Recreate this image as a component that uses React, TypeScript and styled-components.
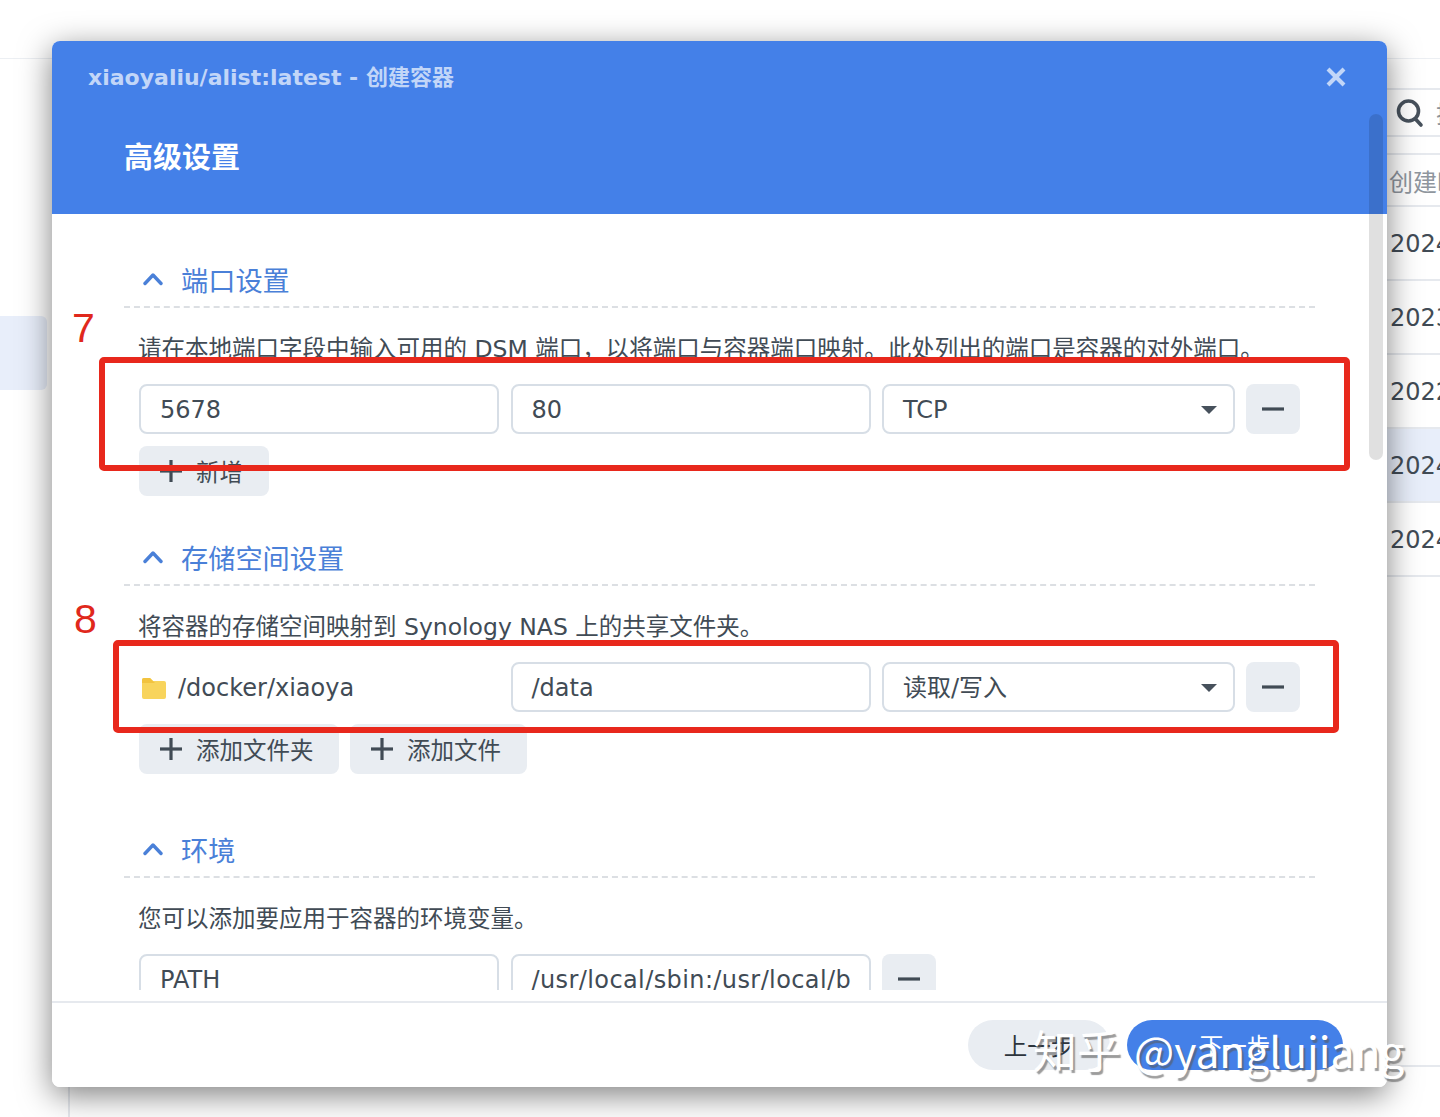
import React from 'react';
import styled, { createGlobalStyle } from 'styled-components';

const GlobalStyle = createGlobalStyle`
  html, body {
    margin: 0;
    padding: 0;
    background: #fff;
  }
  body {
    font-family: 'DejaVu Sans', 'Noto Sans CJK SC', sans-serif;
    color: #414b55;
  }
`;

const Page = styled.div`
  position: relative;
  width: 1440px;
  height: 1117px;
  overflow: hidden;
  background: #fff;
`;

const TopBar = styled.div`
  height: 58px;
  border-bottom: 1px solid #eceff3;
`;

const Main = styled.div`
  display: flex;
  justify-content: space-between;
  height: 1058px;
`;

const Sidebar = styled.div`
  width: 70px;
  padding-top: 257px;
  border-right: 2px solid #e6e9ee;
  box-sizing: border-box;
`;

const SidebarItem = styled.div`
  width: 47px;
  height: 74px;
  background: #e8eefa;
  border-radius: 0 6px 6px 0;
`;

const Table = styled.div`
  width: 53px;
  overflow: hidden;
  border-top: 2px solid #e6e9ee;
  margin-top: 29px;
  height: 979px;
  border-bottom: 2px solid #e6e9ee;
  box-sizing: border-box;
`;

const SearchBox = styled.div`
  display: flex;
  align-items: center;
  gap: 12px;
  height: 47px;
  padding-left: 9px;
  border-bottom: 2px solid #e6e9ee;
  box-sizing: border-box;
  color: #8a929b;
  font-size: 24px;
  white-space: nowrap;
`;

const TableHead = styled.div`
  display: flex;
  align-items: center;
  height: 54px;
  margin-top: 16px;
  padding-left: 2px;
  border-top: 2px solid #e6e9ee;
  border-bottom: 2px solid #e6e9ee;
  box-sizing: border-box;
  color: #8f969e;
  font-size: 24px;
  white-space: nowrap;
`;

const TableRow = styled.div<{ $selected?: boolean }>`
  display: flex;
  align-items: center;
  height: 74px;
  padding: 2px 0 0 3px;
  border-bottom: 2px solid #e6e9ee;
  box-sizing: border-box;
  background: ${p => (p.$selected ? '#e8eefa' : 'transparent')};
  font-size: 24px;
  white-space: nowrap;
`;

const Modal = styled.div`
  position: absolute;
  left: 52px;
  top: 41px;
  width: 1335px;
  height: 1046px;
  display: flex;
  flex-direction: column;
  background: #fff;
  border-radius: 8px;
  overflow: hidden;
`;

const ModalShadow = styled.div`
  position: absolute;
  left: 52px;
  top: 41px;
  width: 1335px;
  height: 1046px;
  border-radius: 8px;
  box-shadow: 0 8px 32px rgba(0, 0, 0, 0.5);
`;

const Header = styled.div`
  position: relative;
  height: 173px;
  flex-shrink: 0;
  background: #4480e8;
  box-sizing: border-box;
  padding: 21px 36px 0;
`;

const HeaderTitle = styled.div`
  font-size: 22px;
  line-height: 32px;
  font-weight: 700;
  color: #c2d6f8;
`;

const HeaderSub = styled.div`
  margin: 44px 0 0 36px;
  font-size: 29px;
  line-height: 40px;
  font-weight: 700;
  color: #fff;
`;

const CloseButton = styled.svg`
  position: absolute;
  right: 41px;
  top: 26px;
`;

const ScrollThumb = styled.div`
  position: absolute;
  right: 4px;
  top: 73px;
  width: 14px;
  height: 346px;
  border-radius: 7px;
  background: rgba(0, 0, 0, 0.12);
`;

const Body = styled.div`
  height: 776px;
  flex-shrink: 0;
  overflow: hidden;
  padding-left: 72px;
  width: 1191px;
  box-sizing: content-box;
`;

const Section = styled.section<{ $top: number }>`
  margin-top: ${p => p.$top}px;
`;

const SectionHead = styled.div`
  display: flex;
  align-items: center;
  gap: 18px;
  height: 36px;
  padding: 0 0 9px 19px;
  border-bottom: 2px dashed #dcdfe3;
  color: #4a80d8;
  font-size: 27.2px;
`;

const Desc = styled.p`
  margin: 23px 0 17px 14px;
  font-size: 23.5px;
  line-height: 36px;
  color: #414b55;
  white-space: nowrap;
`;

const Row = styled.div<{ $compact?: boolean }>`
  display: grid;
  grid-template-columns: ${p => (p.$compact ? '360px 360px 54px' : '360px 360px 352.5px 54px')};
  gap: 11.5px;
  margin: 0 15px;
`;

const Field = styled.div`
  display: flex;
  align-items: center;
  justify-content: space-between;
  height: 50px;
  padding: 2px 16px 0 19px;
  border: 2px solid #d7dee6;
  border-radius: 8px;
  box-sizing: border-box;
  font-size: 24px;
  line-height: 30px;
  color: #414b55;
  white-space: nowrap;
  overflow: hidden;
`;

const LongField = styled(Field)`
  letter-spacing: 0.4px;
`;

const PathCell = styled.div`
  display: flex;
  align-items: center;
  gap: 11px;
  height: 50px;
  padding: 2px 0 0 2px;
  box-sizing: border-box;
  font-size: 24px;
  line-height: 30px;
  white-space: nowrap;
`;

const Caret = styled.span`
  width: 0;
  height: 0;
  border-left: 8px solid transparent;
  border-right: 8px solid transparent;
  border-top: 8px solid #47515c;
`;

const IconButton = styled.div`
  display: flex;
  align-items: center;
  justify-content: center;
  height: 50px;
  border-radius: 8px;
  background: #e9edf2;
`;

const Actions = styled.div`
  display: flex;
  gap: 11px;
  margin: 12px 15px 0;
`;

const AddButton = styled.div`
  display: flex;
  align-items: center;
  gap: 14px;
  height: 50px;
  padding: 0 25.5px 0 21px;
  border-radius: 8px;
  background: #e9edf2;
  font-size: 23.5px;
  color: #414b55;
  white-space: nowrap;
`;

const Footer = styled.div`
  flex: 1;
  margin-top: 11px;
  display: flex;
  justify-content: flex-end;
  gap: 17px;
  padding: 17px 44px 0 0;
  border-top: 2px solid #e6e9ee;
`;

const FooterButton = styled.div<{ $primary?: boolean }>`
  display: flex;
  align-items: center;
  justify-content: center;
  width: ${p => (p.$primary ? '216px' : '142px')};
  height: 50px;
  border-radius: 25px;
  background: ${p => (p.$primary ? '#4480e8' : '#e9edf2')};
  color: ${p => (p.$primary ? '#fff' : '#2c343c')};
  font-size: 23.5px;
`;

const Callout = styled.div<{ $x: number; $y: number; $w: number; $h: number }>`
  position: absolute;
  left: ${p => p.$x}px;
  top: ${p => p.$y}px;
  width: ${p => p.$w}px;
  height: ${p => p.$h}px;
  border: 6px solid #e8281c;
  border-radius: 5px;
  box-sizing: border-box;
`;

const CalloutNumber = styled.div<{ $x: number; $y: number }>`
  position: absolute;
  left: ${p => p.$x}px;
  top: ${p => p.$y}px;
  font-family: 'Liberation Sans', sans-serif;
  font-size: 41px;
  line-height: 44px;
  color: #e0281c;
`;

const Watermark = styled.div`
  position: absolute;
  left: 1033px;
  top: 1017px;
  display: flex;
  align-items: baseline;
  gap: 13px;
  font-family: 'Noto Sans CJK SC', sans-serif;
  font-size: 44px;
  line-height: 64px;
  color: #fff;
  text-shadow: 2px 3px 1px rgba(90, 90, 90, 0.6);
  white-space: nowrap;
`;

const WatermarkHandle = styled.span`
  font-size: 42.5px;
`;

const Chevron = () => (
  <svg width="20" height="14" viewBox="0 0 20 14" fill="none" stroke="#4a80d8" strokeWidth="3.4" strokeLinecap="round" strokeLinejoin="round">
    <polyline points="2,11.5 10,3 18,11.5" />
  </svg>
);

const Plus = () => (
  <svg width="22" height="22" viewBox="0 0 22 22" stroke="#414b55" strokeWidth="3.2">
    <line x1="0" y1="11" x2="22" y2="11" />
    <line x1="11" y1="0" x2="11" y2="22" />
  </svg>
);

const Minus = () => (
  <svg width="22" height="4" viewBox="0 0 22 4" stroke="#414b55" strokeWidth="3.2">
    <line x1="0" y1="2" x2="22" y2="2" />
  </svg>
);

const Folder = () => (
  <svg width="26" height="24" viewBox="0 0 26 24">
    <path d="M1 4a2 2 0 0 1 2-2h6l3 3h11a2 2 0 0 1 2 2v14a2 2 0 0 1-2 2H3a2 2 0 0 1-2-2z" fill="#f8d45c" />
    <path d="M1 4a2 2 0 0 1 2-2h6l3 3 2 2H1z" fill="#f2c33f" />
  </svg>
);

const SearchGlyph = () => (
  <svg width="28" height="30" viewBox="0 0 28 30" fill="none" stroke="#47515c" strokeWidth="3.6" strokeLinecap="round" style={{ flexShrink: 0 }}>
    <circle cx="12.5" cy="13" r="10" />
    <line x1="19.5" y1="21" x2="25" y2="27" />
  </svg>
);

export default function App(): React.JSX.Element {
  return (
    <Page>
      <GlobalStyle />
      <TopBar />
      <Main>
        <Sidebar>
          <SidebarItem />
        </Sidebar>
        <Table>
          <SearchBox>
            <SearchGlyph />
            <span>搜索</span>
          </SearchBox>
          <TableHead>创建时间</TableHead>
          <TableRow>2024</TableRow>
          <TableRow>2023</TableRow>
          <TableRow>2022</TableRow>
          <TableRow $selected>2024</TableRow>
          <TableRow>2024</TableRow>
        </Table>
      </Main>

      <ModalShadow />
      <Modal>
        <Header>
          <HeaderTitle>xiaoyaliu/alist:latest - 创建容器</HeaderTitle>
          <HeaderSub>高级设置</HeaderSub>
          <CloseButton width="20" height="20" viewBox="0 0 20 20" stroke="#c2d6f8" strokeWidth="4">
            <line x1="2" y1="2" x2="18" y2="18" />
            <line x1="18" y1="2" x2="2" y2="18" />
          </CloseButton>
        </Header>

        <Body>
          <Section $top={47}>
            <SectionHead>
              <Chevron />
              端口设置
            </SectionHead>
            <Desc>请在本地端口字段中输入可用的 DSM 端口，以将端口与容器端口映射。此处列出的端口是容器的对外端口。</Desc>
            <Row>
              <Field>5678</Field>
              <Field>80</Field>
              <Field>
                TCP
                <Caret />
              </Field>
              <IconButton>
                <Minus />
              </IconButton>
            </Row>
            <Actions>
              <AddButton>
                <Plus />
                新增
              </AddButton>
            </Actions>
          </Section>

          <Section $top={43}>
            <SectionHead>
              <Chevron />
              存储空间设置
            </SectionHead>
            <Desc>将容器的存储空间映射到 Synology NAS 上的共享文件夹。</Desc>
            <Row>
              <PathCell>
                <Folder />
                /docker/xiaoya
              </PathCell>
              <Field>/data</Field>
              <Field>
                读取/写入
                <Caret />
              </Field>
              <IconButton>
                <Minus />
              </IconButton>
            </Row>
            <Actions>
              <AddButton>
                <Plus />
                添加文件夹
              </AddButton>
              <AddButton>
                <Plus />
                添加文件
              </AddButton>
            </Actions>
          </Section>

          <Section $top={57}>
            <SectionHead>
              <Chevron />
              环境
            </SectionHead>
            <Desc>您可以添加要应用于容器的环境变量。</Desc>
            <Row $compact>
              <Field>PATH</Field>
              <LongField>/usr/local/sbin:/usr/local/b</LongField>
              <IconButton>
                <Minus />
              </IconButton>
            </Row>
          </Section>
        </Body>

        <Footer>
          <FooterButton>上一步</FooterButton>
          <FooterButton $primary>下一步</FooterButton>
        </Footer>
        <ScrollThumb />
      </Modal>

      <Callout $x={99} $y={357} $w={1251} $h={114} />
      <Callout $x={113} $y={640} $w={1226} $h={93} />
      <CalloutNumber $x={72} $y={306}>7</CalloutNumber>
      <CalloutNumber $x={74} $y={597}>8</CalloutNumber>
      <Watermark>
        <span>知乎</span>
        <WatermarkHandle>@yanglujiang</WatermarkHandle>
      </Watermark>
    </Page>
  );
}
